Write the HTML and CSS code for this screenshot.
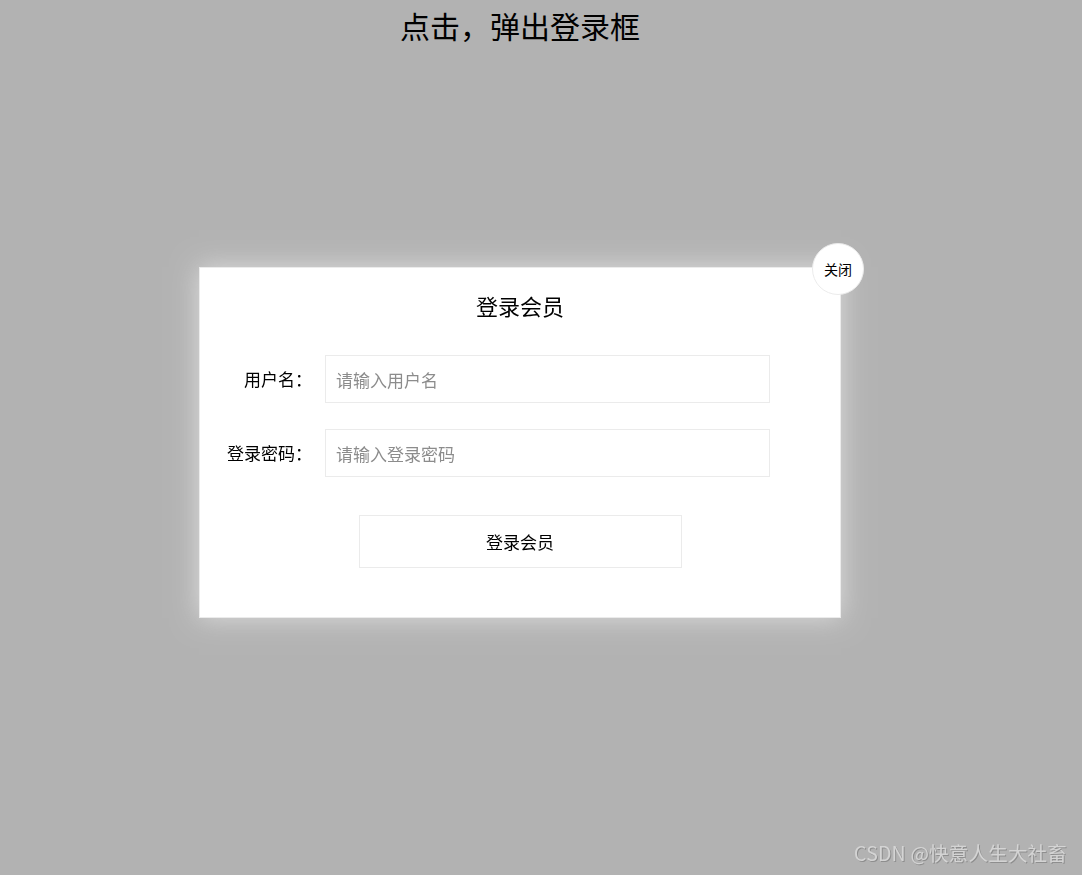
FILE: index.html
```html
<!DOCTYPE html>
<html lang="zh-CN">
<head>
<meta charset="utf-8">
<title>登录框</title>
<link rel="stylesheet" href="styles.css">
</head>
<body>
  <div class="login-header"><a class="link" href="javascript:;">点击，弹出登录框</a></div>

  <div class="login-bg"></div>

  <div class="login">
    <div class="login-title">登录会员
      <span class="close-login">关闭</span>
    </div>
    <div class="login-input-content">
      <div class="login-input">
        <label>用户名：</label>
        <input type="text" placeholder="请输入用户名" class="list-input">
      </div>
      <div class="login-input">
        <label>登录密码：</label>
        <input type="password" placeholder="请输入登录密码" class="list-input">
      </div>
    </div>
    <div class="login-button"><a href="javascript:;" class="login-button-submit">登录会员</a></div>
  </div>

  <div class="watermark">CSDN @快意人生大社畜</div>
</body>
</html>
```
FILE: styles.css
```css
* {
  box-sizing: border-box;
}

body {
  margin: 0;
  width: 1082px;
  height: 875px;
  overflow: hidden;
  background: #fff;
  font-family: "Noto Sans CJK SC", "Liberation Sans", sans-serif;
  color: #000;
}

a {
  color: #000;
  text-decoration: none;
}

.login-header {
  width: 1040px;
  margin-top: 6px;
  text-align: center;
  height: 38px;
  line-height: 38px;
  font-size: 30px;
}

.login-bg {
  position: fixed;
  top: 0;
  left: 0;
  width: 100%;
  height: 100%;
  background: rgba(0, 0, 0, 0.3);
}

.login {
  position: fixed;
  left: 199px;
  top: 267px;
  width: 642px;
  height: 351px;
  background: #fff;
  border: 1px solid #ebebeb;
  box-shadow: 0 0 25px #ddd;
  z-index: 10;
}

.login-title {
  position: relative;
  margin-top: 12px;
  height: 50px;
  line-height: 50px;
  text-align: center;
  font-size: 22px;
}

.close-login {
  position: absolute;
  right: -24px;
  top: -37px;
  width: 52px;
  height: 52px;
  border-radius: 50%;
  border: 1px solid #ebebeb;
  background: #fff;
  font-size: 14px;
  line-height: 50px;
  text-align: center;
}

.login-input-content {
  margin-top: 25px;
}

.login-input {
  display: flex;
  align-items: center;
  margin-bottom: 26px;
}

.login-input label {
  width: 125px;
  padding-right: 13px;
  text-align: right;
  font-size: 17px;
  line-height: 48px;
  height: 48px;
}

.list-input {
  width: 445px;
  height: 48px;
  border: 1px solid #ebebeb;
  padding: 0 0 0 10px;
  font-family: inherit;
  font-size: 17px;
  outline: none;
  background: #fff;
}

.list-input::placeholder {
  color: #8c8c8c;
}

.login-button {
  width: 323px;
  height: 53px;
  margin: 38px auto 0;
  border: 1px solid #ebebeb;
  text-align: center;
  line-height: 51px;
  font-size: 17px;
}

.watermark {
  position: fixed;
  right: 15px;
  bottom: 8px;
  font-size: 19.5px;
  letter-spacing: 0.2px;
  color: #d4d4d4;
  text-shadow: 1px 1px 0 #8e8e8e;
  z-index: 20;
}
```
